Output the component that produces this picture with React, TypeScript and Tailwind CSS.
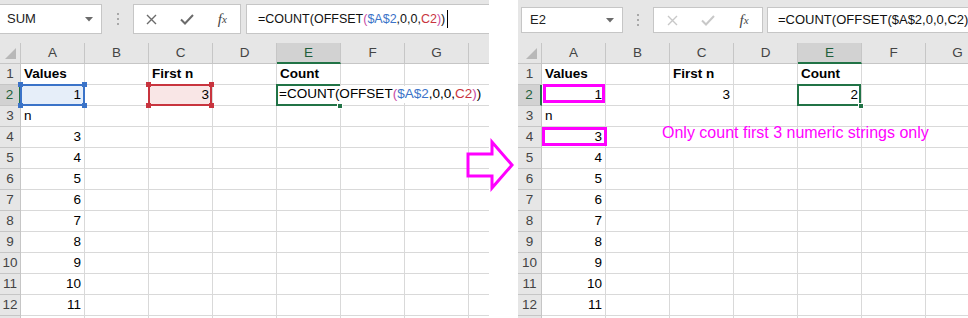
import type { ReactNode } from "react";

type Mark = "blue" | "red" | "edit" | "active" | "pinkA2" | "pinkA4";
type CellData = { v?: ReactNode; right?: boolean; bold?: boolean; mark?: Mark };

const font = "font-['Liberation_Sans',Arial,sans-serif]";

// ─── Formula text ─────────────────────────────────────────────────────────────

function FormulaText({ colored }: { colored?: boolean }) {
  if (!colored) return <>=COUNT(OFFSET($A$2,0,0,C2))</>;
  return (
    <>
      =COUNT(OFFSET<span className="text-[#c94aa6]">(</span>
      <span className="text-[#3b73c8]">$A$2</span>,0,0,
      <span className="text-[#c8343e]">C2</span>
      <span className="text-[#c94aa6]">)</span>)
    </>
  );
}

// ─── Formula bar ──────────────────────────────────────────────────────────────

function FormulaBar({ side }: { side: "left" | "right" }) {
  const L = side === "left";
  const icon = L ? "#6b6b6b" : "#c8c8c8";
  const h = L ? "h-[30px]" : "h-[26px]";
  return (
    <div className={`flex h-[43px] bg-[#e6e6e6] ${L ? "pt-[4px]" : "pt-[7px] pl-[3px]"}`}>
      <div className={`flex w-[102px] shrink-0 items-center justify-between border border-[#c6c6c6] bg-white pr-[8px] text-[13px] text-[#222] ${h} ${L ? "border-l-0 pl-[7px]" : "pl-[8px]"}`}>
        <span>{L ? "SUM" : "E2"}</span>
        <svg width="8" height="5" viewBox="0 0 8 5">
          <path d="M0 0h8L4 4.5z" fill="#6b6b6b" />
        </svg>
      </div>
      <div className={`flex shrink-0 flex-col items-center justify-center gap-[3px] ${L ? "w-[31px]" : "w-[30px]"} ${h}`}>
        <span className="size-[2px] bg-[#a8a8a8]" />
        <span className="size-[2px] bg-[#a8a8a8]" />
        <span className="size-[2px] bg-[#a8a8a8]" />
      </div>
      <div className={`flex shrink-0 border border-[#c6c6c6] bg-white ${h} ${L ? "w-[108px]" : "w-[110px]"}`}>
        <div className="flex w-[36px] items-center justify-center">
          <svg width="11" height="11" viewBox="0 0 11 11">
            <path d="M1 1l9 9M10 1l-9 9" stroke={icon} strokeWidth="1.4" fill="none" />
          </svg>
        </div>
        <div className="flex w-[36px] items-center justify-center">
          <svg width="14" height="11" viewBox="0 0 14 11">
            <path d="M1 5.5l4 4L13 1" stroke={icon} strokeWidth="2" fill="none" />
          </svg>
        </div>
        <div className="flex w-[36px] items-center justify-center font-['Liberation_Serif',serif] italic text-[#444]">
          <span className="text-[15px]">f</span>
          <span className="text-[11px]">x</span>
        </div>
      </div>
      <div className={`flex min-w-0 flex-1 items-center overflow-hidden whitespace-nowrap border border-r-0 border-[#c6c6c6] bg-white text-[#111] ${h} ${L ? "ml-[5px] pl-[11px] text-[12.5px]" : "ml-[4px] pl-[10px] text-[13px]"}`}>
        <FormulaText colored={L} />
        {L && <span className="ml-[2px] h-[18px] w-[1px] shrink-0 bg-black" />}
      </div>
    </div>
  );
}

// ─── Cell marks ───────────────────────────────────────────────────────────────

function Handles({ c }: { c: string }) {
  return (
    <>
      <span className={`absolute -left-[4px] -top-[4px] size-[5px] ${c}`} />
      <span className={`absolute -right-[4px] -top-[4px] size-[5px] ${c}`} />
      <span className={`absolute -bottom-[4px] -left-[4px] size-[5px] ${c}`} />
      <span className={`absolute -bottom-[4px] -right-[4px] size-[5px] ${c}`} />
    </>
  );
}

function MarkBox({ mark }: { mark: Mark }) {
  if (mark === "blue")
    return (
      <div className="pointer-events-none absolute -bottom-[1px] -left-[1px] -right-[1px] -top-[1px] z-10 border-2 border-[#3b73c8]">
        <Handles c="bg-[#3b73c8]" />
      </div>
    );
  if (mark === "red")
    return (
      <div className="pointer-events-none absolute -bottom-[1px] -left-[1px] -top-[1px] right-0 z-10 border-2 border-[#c8343e]">
        <Handles c="bg-[#c8343e]" />
      </div>
    );
  if (mark === "edit" || mark === "active")
    return (
      <div className="pointer-events-none absolute -bottom-[1px] -left-[1px] -top-[1px] right-0 z-10 border-2 border-[#217346]">
        <span className="absolute -bottom-[5px] -right-[5px] z-30 size-[6px] border border-white bg-[#217346]" />
      </div>
    );
  if (mark === "pinkA2")
    return <div className="pointer-events-none absolute -top-[1px] bottom-[2px] left-[1px] right-0 z-10 border-[3px] border-[#ff00ff]" />;
  return <div className="pointer-events-none absolute -right-[2px] bottom-[1px] left-0 top-0 z-10 border-[3px] border-[#ff00ff]" />;
}

// ─── Grid ─────────────────────────────────────────────────────────────────────

function Grid({ cols, rows, headW, selCol }: { cols: string[]; rows: CellData[][]; headW: string; selCol: number }) {
  return (
    <div className="text-[13.5px] text-black">
      {/* column headers */}
      <div className="flex h-[21px] bg-[#e6e6e6]">
        <div className={`relative shrink-0 border-b border-r border-[#c6c6c6] ${headW}`}>
          <svg className="absolute bottom-[4px] right-[4px]" width="11" height="11" viewBox="0 0 11 11">
            <path d="M11 0v11H0z" fill="#b8b8b8" />
          </svg>
        </div>
        {cols.map((c, i) =>
          i === selCol ? (
            <div key={i} className="flex w-[64px] shrink-0 items-center justify-center border-b-2 border-r border-b-[#217346] border-r-[#c6c6c6] bg-[#d2d2d2] pt-[1px] text-[#1f5f3b]">
              {c}
            </div>
          ) : (
            <div key={i} className="flex w-[64px] shrink-0 items-center justify-center border-b border-r border-[#c6c6c6] text-[#444]">
              {c}
            </div>
          )
        )}
      </div>

      {/* body; the last row only peeks in at the bottom edge */}
      {rows.map((row, r) => {
        const label = r < 12 ? r + 1 : "";
        return (
          <div key={r} className="flex h-[21px]">
            {r === 1 ? (
              <div className={`flex shrink-0 items-center justify-center border-b border-r-2 border-b-[#c6c6c6] border-r-[#217346] bg-[#d2d2d2] text-[#1f5f3b] ${headW}`}>
                {label}
              </div>
            ) : (
              <div className={`flex shrink-0 items-center justify-center border-b border-r border-[#c6c6c6] bg-[#e6e6e6] text-[#444] ${headW}`}>
                {label}
              </div>
            )}
            {cols.map((c, i) => {
              const cell = row[i] ?? {};
              const fill =
                cell.mark === "blue" ? "bg-[#e6eef9]" : cell.mark === "red" ? "bg-[#f9e6e6]" : "bg-white";
              return (
                <div
                  key={i}
                  className={`relative flex h-[21px] w-[64px] shrink-0 items-center border-b border-r border-[#d9d9d9] px-[3px] ${fill} ${cell.right ? "justify-end" : ""} ${cell.bold ? "font-bold" : ""}`}
                >
                  {cell.mark === "edit" ? (
                    <span className="absolute bottom-[2px] left-[1px] top-[1px] z-20 flex items-center whitespace-nowrap bg-white pl-[1px] pr-[2px]">
                      <FormulaText colored />
                    </span>
                  ) : (
                    <span className="relative z-20 whitespace-nowrap">{cell.v}</span>
                  )}
                  {cell.mark && <MarkBox mark={cell.mark} />}
                </div>
              );
            })}
          </div>
        );
      })}
    </div>
  );
}

// ─── Data ─────────────────────────────────────────────────────────────────────

const tail: CellData[][] = [3, 4, 5, 6, 7, 8, 9, 10, 11].map(n => [{ v: n, right: true }]);

const leftRows: CellData[][] = [
  [{ v: "Values", bold: true }, {}, { v: "First n", bold: true }, {}, { v: "Count", bold: true }],
  [{ v: 1, right: true, mark: "blue" }, {}, { v: 3, right: true, mark: "red" }, {}, { mark: "edit" }],
  [{ v: "n" }],
  ...tail,
  [],
];

const rightRows: CellData[][] = [
  [{ v: "Values", bold: true }, {}, { v: "First n", bold: true }, {}, { v: "Count", bold: true }],
  [{ v: 1, right: true, mark: "pinkA2" }, {}, { v: 3, right: true }, {}, { v: 2, right: true, mark: "active" }],
  [{ v: "n" }],
  [{ v: 3, right: true, mark: "pinkA4" }],
  ...tail.slice(1),
  [],
];

// ─── Page ─────────────────────────────────────────────────────────────────────

export default function App() {
  return (
    <div className={`relative flex h-[318px] w-[968px] overflow-hidden bg-white ${font}`}>
      <div className="w-[489px] shrink-0 overflow-hidden">
        <FormulaBar side="left" />
        {/* column H is cut by the screenshot edge, so no label */}
        <Grid cols={["A", "B", "C", "D", "E", "F", "G", ""]} rows={leftRows} headW="w-[21px]" selCol={4} />
      </div>

      <div className="w-[29px] shrink-0" />

      <div className="relative min-w-0 flex-1 overflow-hidden">
        <FormulaBar side="right" />
        <Grid cols={["A", "B", "C", "D", "E", "F", "G"]} rows={rightRows} headW="w-[24px]" selCol={4} />
        <div className="absolute left-[144px] top-[124px] z-30 whitespace-nowrap text-[16px] leading-[18px] text-[#ff00ff]">
          Only count first 3 numeric strings only
        </div>
      </div>

      {/* arrow */}
      <svg className="absolute left-[465px] top-[138px] z-40" width="50" height="54" viewBox="0 0 50 54">
        <path d="M3 16H27V4L47 27L27 50V38H3Z" fill="none" stroke="#ff00ff" strokeWidth="3" />
      </svg>
    </div>
  );
}
